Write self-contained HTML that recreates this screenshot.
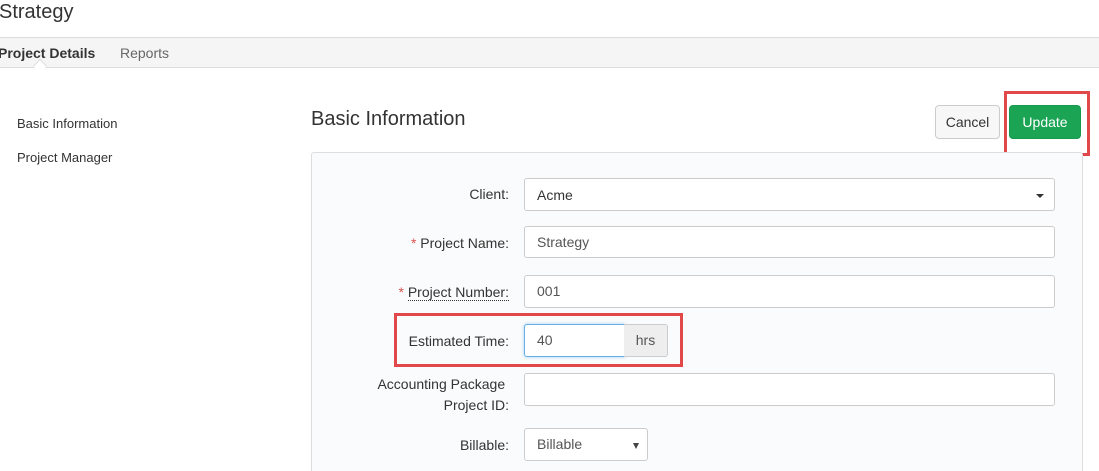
<!DOCTYPE html>
<html><head><style>
html,body{margin:0;width:1099px;height:471px;overflow:hidden}
body{background:#fff;font-family:"Liberation Sans",sans-serif;font-size:14px;color:#333;position:relative}
.a{position:absolute}
.inp{position:absolute;left:524px;width:531px;height:31px;border:1px solid #ccc;border-radius:3px;background:#fff;box-sizing:border-box;padding:0 12px;line-height:31px;font-size:14px;color:#555}
.lbl{position:absolute;right:590px;text-align:right;font-size:14px;color:#333}
.req{color:#d9534f}
</style></head><body>
<div class="a" style="left:-1px;top:0;font-size:20px;line-height:24px;color:#333">Strategy</div>
<div class="a" style="left:0;top:37px;width:1099px;height:29px;background:#f5f5f5;border-top:1px solid #ddd;border-bottom:1px solid #ddd"></div>
<div class="a" style="left:-2px;top:45px;font-weight:bold;font-size:14px">Project Details</div>
<div class="a" style="left:120px;top:45px;color:#666;font-size:14px">Reports</div>
<div class="a" style="left:35px;top:61px;width:9px;height:9px;background:#fff;border-left:1px solid #ddd;border-top:1px solid #ddd;transform:rotate(45deg)"></div>
<div class="a" style="left:17px;top:116px;font-size:13px">Basic Information</div>
<div class="a" style="left:17px;top:150px;font-size:13px">Project Manager</div>
<div class="a" style="left:311px;top:108px;font-size:20px">Basic Information</div>
<div class="a" style="left:935px;top:105px;width:65px;height:34px;box-sizing:border-box;border:1px solid #ccc;border-radius:4px;background:#f7f7f7;text-align:center;line-height:32px">Cancel</div>
<div class="a" style="left:1009px;top:105px;width:72px;height:34px;box-sizing:border-box;border:1px solid #179a4c;border-radius:4px;background:#1aa454;color:#fff;text-align:center;line-height:32px">Update</div>
<div class="a" style="left:1004px;top:91px;width:80px;height:59px;border:3px solid #e0484a"></div>
<div class="a" style="left:311px;top:152px;width:770px;height:330px;border:1px solid #ddd;border-radius:3px;background:#fafbfc"></div>
<div class="lbl" style="top:186px">Client:</div>
<div class="inp" style="top:178px;height:33px;line-height:33px;color:#333">Acme<span class="a" style="right:10px;top:15px;border-left:4px solid transparent;border-right:4px solid transparent;border-top:4px solid #333"></span></div>
<div class="lbl" style="top:235px"><span class="req">* </span>Project Name:</div>
<div class="inp" style="top:226px;height:32px">Strategy</div>
<div class="lbl" style="top:284px"><span class="req">* </span><span style="border-bottom:1px dotted #333">Project Number:</span></div>
<div class="inp" style="top:275px;height:33px">001</div>
<div class="lbl" style="top:333px">Estimated Time:</div>
<div class="inp" style="top:324px;width:101px;height:33px;border-color:#66afe9;box-shadow:0 0 3px rgba(102,175,233,.6);border-radius:3px 0 0 3px">40</div>
<div class="a" style="left:624px;top:324px;width:44px;height:33px;box-sizing:border-box;border:1px solid #ccc;border-left:0;border-radius:0 3px 3px 0;background:#eee;color:#555;text-align:center;line-height:31px">hrs</div>
<div class="a" style="left:394px;top:313px;width:283px;height:48px;border:3px solid #e0484a"></div>
<div class="lbl" style="top:374px;line-height:21px">Accounting Package&nbsp;<br>Project ID:</div>
<div class="inp" style="top:373px;height:33px"></div>
<div class="lbl" style="top:437px">Billable:</div>
<div class="inp" style="top:428px;width:124px;height:33px;color:#555;font-size:14px">Billable<span class="a" style="right:8px;top:14px;border-left:3.5px solid transparent;border-right:3.5px solid transparent;border-top:6px solid #444"></span></div>
</body></html>
